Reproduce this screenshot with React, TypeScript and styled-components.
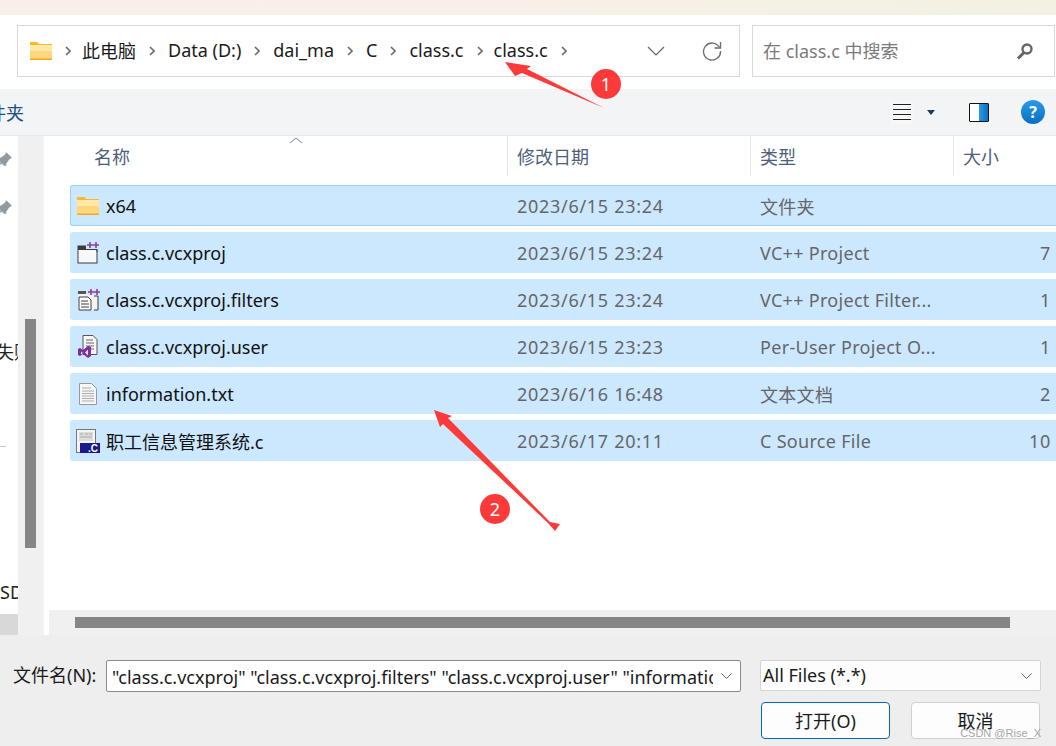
import styled, { createGlobalStyle } from "styled-components";

const files = [
  { name: "x64", date: "2023/6/15 23:24", type: "文件夹", size: "", icon: "folder", pad: 6 },
  { name: "class.c.vcxproj", date: "2023/6/15 23:24", type: "VC++ Project", size: "7", icon: "proj", pad: 6 },
  { name: "class.c.vcxproj.filters", date: "2023/6/15 23:24", type: "VC++ Project Filter...", size: "1", icon: "filters", pad: 6 },
  { name: "class.c.vcxproj.user", date: "2023/6/15 23:23", type: "Per-User Project O...", size: "1", icon: "user", pad: 7 },
  { name: "information.txt", date: "2023/6/16 16:48", type: "文本文档", size: "2", icon: "txt", pad: 8 },
  { name: "职工信息管理系统.c", date: "2023/6/17 20:11", type: "C Source File", size: "10", icon: "dev", pad: 5 },
];

const crumbs = ["此电脑", "Data (D:)", "dai_ma", "C", "class.c", "class.c"];

function FolderIcon() {
  return (
    <svg width="22" height="18" viewBox="0 0 22 18">
      <path d="M0 0h7l2 2h13v14H0z" fill="#f7b928" />
      <rect x="0" y="3" width="22" height="15" fill="#fdd77d" />
      <rect x="0" y="3" width="22" height="6" fill="#ffe7a6" />
      <rect x="0" y="16.500" width="22" height="1.500" fill="#eeac1e" />
    </svg>
  );
}

function Plus({ x, y }: { x: number; y: number }) {
  return <path d={`M${x - 3} ${y}h6M${x} ${y - 3}v6`} stroke="#8f3f98" strokeWidth="1.600" fill="none" />;
}

function FileIcon({ kind }: { kind: string }) {
  if (kind === "folder") return <FolderIcon />;
  if (kind === "proj")
    return (
      <svg width="23" height="22" viewBox="0 0 23 22">
        <rect x="1" y="4" width="19" height="17" fill="#f8f8f8" stroke="#3c3c3c" />
        <rect x="1" y="4" width="19" height="4" fill="#3c3c3c" />
        <rect x="9" y="0" width="14" height="7" fill="#cce8ff" />
        <Plus x={13} y={3} />
        <Plus x={19} y={3} />
        <path d="M20 8v2" stroke="#3c3c3c" />
      </svg>
    );
  if (kind === "filters")
    return (
      <svg width="23" height="22" viewBox="0 0 23 22">
        <rect x="1" y="2" width="8" height="3" fill="#555" />
        <path d="M1 5h20v16H1z" fill="#f4f4f4" />
        <path d="M17 7h4v14h-4" fill="none" stroke="#3c3c3c" />
        <path d="M2 8h9l3 3v10H2z" fill="#fff" stroke="#3c3c3c" />
        <path d="M4 12h7M4 15h8M4 18h8" stroke="#3c3c3c" />
        <rect x="10" y="0" width="12" height="6" fill="#cce8ff" />
        <Plus x={14} y={3} />
        <Plus x={20} y={3} />
      </svg>
    );
  if (kind === "user")
    return (
      <svg width="21" height="23" viewBox="0 0 21 23">
        <path d="M5 .5h10l4 4v15H5z" fill="#f6f6f6" stroke="#555" />
        <path d="M8 5h7M8 8h8M8 11h8M8 14h8" stroke="#666" />
        <path d="M0 14l2-1 3 2 5-4 3 1v9l-3 2-5-4-3 2-2-1z" fill="#7d2f9e" />
        <path d="M3 16.500v3l2-1.500zM10 14.500l-3 3 3 3z" fill="#cce8ff" />
      </svg>
    );
  if (kind === "txt")
    return (
      <svg width="18" height="22" viewBox="0 0 18 22">
        <path d="M.5.5h12l5 5v16H.5z" fill="#f7f7f7" stroke="#999" />
        <path d="M3 5h9M3 8h12M3 10.500h12M3 13h12M3 15.500h12M3 18h12" stroke="#aaa" />
      </svg>
    );
  return (
    <svg width="24" height="24" viewBox="0 0 24 24">
      <rect x="0.500" y="0.500" width="19" height="23" fill="#f4f4f4" stroke="#777" />
      <rect x="3" y="3" width="14" height="9" fill="#dcdcdc" />
      <path d="M4 5h3M9 5h3M13 5h3M4 8h12" stroke="#aaa" />
      <rect x="4" y="14" width="20" height="10" fill="#1a1a8c" />
      <text x="12" y="23" fontSize="10" fontWeight="700" fill="#fff" fontFamily="Liberation Sans, sans-serif">.C</text>
    </svg>
  );
}

export default function App() {
  return (
    <Page>
      <GlobalStyle />
      <TopStrip />
      <AddressRow>
        <AddressBox>
          <Lead>
            <FolderIcon />
            <Chevron />
          </Lead>
          {crumbs.map((c, i) => (
            <Crumb key={c + i} $shift={i === crumbs.length - 1 ? -2 : 0}>
              <CrumbText>{c}</CrumbText>
              <Chevron />
            </Crumb>
          ))}
          <AddressTools>
            <svg width="18" height="10" viewBox="0 0 18 10">
              <path d="M1 1l8 8 8-8" stroke="#666" strokeWidth="1.200" fill="none" />
            </svg>
            <svg width="20" height="20" viewBox="0 0 20 20">
              <path d="M17.500 6.500A8.500 8.500 0 1 0 18.500 10" stroke="#6e6e6e" strokeWidth="1.400" fill="none" />
              <path d="M18.500 1v6h-6" stroke="#6e6e6e" strokeWidth="1.400" fill="none" />
            </svg>
          </AddressTools>
        </AddressBox>
        <SearchBox>
          <CrumbText>在 class.c 中搜索</CrumbText>
          <svg width="18" height="18" viewBox="0 0 18 18">
            <circle cx="11" cy="7" r="4.500" stroke="#666" strokeWidth="2.400" fill="none" />
            <path d="M8 10.500L2 16.500" stroke="#666" strokeWidth="3" />
          </svg>
        </SearchBox>
      </AddressRow>
      <Toolbar>
        <ToolLabel>文件夹</ToolLabel>
        <ToolIcons>
          <ViewButton>
            <svg width="20" height="18" viewBox="0 0 20 18">
              <path d="M1 1.500h18M1 6.500h18M1 11.500h18M1 16.500h18" stroke="#222" strokeWidth="1" />
            </svg>
          </ViewButton>
          <Caret />
          <PaneIcon />
          <HelpIcon>?</HelpIcon>
        </ToolIcons>
      </Toolbar>
      <Body>
        <Nav>
          <NavColumn>
            <NavItem $h={48}><PinIcon /></NavItem>
            <NavItem $h={48}><PinIcon /></NavItem>
            <NavItem $h={98} />
            <NavItem $h={44} $indent={-4}>失败</NavItem>
            <NavItem $h={72} />
            <NavRule />
            <NavItem $h={167} $bottom>SD卡</NavItem>
            <NavFoot />
          </NavColumn>
          <NavTrack>
            <NavThumb />
          </NavTrack>
          <NavGap />
        </Nav>
        <ListPane>
          <Head>
            <HeadCell $pad={24}>
              名称
              <SortMark viewBox="0 0 14 7">
                <path d="M1 6l6-5 6 5" stroke="#888" fill="none" />
              </SortMark>
            </HeadCell>
            <HeadCell $line>修改日期</HeadCell>
            <HeadCell $line>类型</HeadCell>
            <HeadCell $line>大小</HeadCell>
          </Head>
          <Rows>
            {files.map((f, i) => (
              <Row key={f.name} $focused={i === 0}>
                <NameCell>
                  <IconSlot $pad={f.pad}>
                    <FileIcon kind={f.icon} />
                  </IconSlot>
                  {f.name}
                </NameCell>
                <MetaCell $spacing={0.7}>{f.date}</MetaCell>
                <MetaCell $spacing={0.3}>{f.type}</MetaCell>
                <SizeCell>{f.size}</SizeCell>
              </Row>
            ))}
          </Rows>
          <HScroll>
            <HThumb />
          </HScroll>
        </ListPane>
      </Body>
      <Footer>
        <FieldRow>
          <FieldLabel>文件名(N):</FieldLabel>
          <NameInput>
            <NameText>"class.c.vcxproj" "class.c.vcxproj.filters" "class.c.vcxproj.user" "information.txt" "职工信息管理系统.c"</NameText>
            <SmallChevron />
          </NameInput>
          <TypeSelect>
            <FieldText>All Files (*.*)</FieldText>
            <SmallChevron />
          </TypeSelect>
        </FieldRow>
        <ButtonRow>
          <DialogButton $primary>打开(O)</DialogButton>
          <DialogButton>取消</DialogButton>
        </ButtonRow>
        <Watermark>CSDN @Rise_X</Watermark>
      </Footer>
      <Arrows viewBox="0 0 1056 746">
        <polygon points="505,62 531,66 527,69 604,108 522,73 515,76" fill="#fc3a3a" />
        <polygon points="434,410 452,416 448,418 550,522 560,524 555,531 548,523 443,424 440,427" fill="#fc3a3a" />
      </Arrows>
      <Badge $x={606} $y={84}>1</Badge>
      <Badge $x={495} $y={509}>2</Badge>
    </Page>
  );
}

function Chevron() {
  return (
    <svg width="6" height="10" viewBox="0 0 6 10">
      <path d="M1 1l4 4-4 4" stroke="#6b6b6b" strokeWidth="1.600" fill="none" />
    </svg>
  );
}

function SmallChevron() {
  return (
    <svg width="11" height="6" viewBox="0 0 11 6">
      <path d="M.5.500l5 5 5-5" stroke="#666" fill="none" />
    </svg>
  );
}

function PinIcon() {
  return (
    <svg width="18" height="18" viewBox="0 0 16 16">
      <path d="M10 1l5 5-2 1-3 4 0 2-2 0-2-2-5 4 4-5-2-2 0-2 2 0 4-3z" fill="#8f9aa3" />
    </svg>
  );
}

const GlobalStyle = createGlobalStyle`
  html, body {
    margin: 0;
    padding: 0;
    background: #fff;
  }
  * {
    box-sizing: border-box;
  }
`;

const Page = styled.div`
  position: relative;
  width: 1056px;
  height: 746px;
  overflow: hidden;
  display: flex;
  flex-direction: column;
  background: #fff;
  color: #1a1a1a;
  font-family: "Noto Sans", "Noto Sans CJK SC", sans-serif;
  font-size: 18px;
`;

const TopStrip = styled.div`
  height: 15px;
  background: linear-gradient(90deg, #f8efe9, #f8f0e8 50%, #f3f1e2);
`;

const AddressRow = styled.div`
  height: 74px;
  padding: 10px 1px 12px 17px;
  display: flex;
  gap: 12px;
`;

const AddressBox = styled.div`
  width: 723px;
  border: 1px solid #d9d9d9;
  display: flex;
  align-items: center;
  padding-left: 12px;
  gap: 13px;
`;

const Lead = styled.div`
  display: flex;
  align-items: center;
  gap: 13px;
  margin-right: -2px;
`;

const Crumb = styled.div<{ $shift: number }>`
  display: flex;
  align-items: center;
  gap: 13px;
  margin-left: ${p => p.$shift}px;
`;

const CrumbText = styled.span`
  padding-bottom: 2px;
`;

const AddressTools = styled.div`
  margin-left: auto;
  padding-right: 17px;
  display: flex;
  align-items: center;
  gap: 37px;
`;

const SearchBox = styled.div`
  flex: 1;
  border: 1px solid #d9d9d9;
  display: flex;
  align-items: center;
  justify-content: space-between;
  padding: 0 20px 0 10px;
  color: #7a7a7a;
`;

const Toolbar = styled.div`
  height: 47px;
  background: #f3f4f6;
  border-bottom: 1px solid #e8e8e8;
  display: flex;
  align-items: center;
  justify-content: space-between;
`;

const ToolLabel = styled.div`
  width: 24px;
  overflow: hidden;
  display: flex;
  justify-content: flex-end;
  white-space: nowrap;
  color: #1c4f86;
`;

const ToolIcons = styled.div`
  display: flex;
  align-items: center;
  padding-right: 11px;
`;

const ViewButton = styled.div`
  width: 23px;
  height: 23px;
  background: #f7f7f7;
  display: flex;
  align-items: center;
  justify-content: center;
`;

const Caret = styled.div`
  width: 0;
  height: 0;
  margin-left: 14px;
  border-left: 4px solid transparent;
  border-right: 4px solid transparent;
  border-top: 5px solid #1f3a5f;
`;

const PaneIcon = styled.div`
  width: 20px;
  height: 19px;
  margin-left: 34px;
  border: 1px solid #111;
  border-radius: 1px;
  background: linear-gradient(90deg, #fff 50%, #2a9be6 50%, #0b6fc2);
`;

const HelpIcon = styled.div`
  width: 24px;
  height: 24px;
  margin-left: 32px;
  border-radius: 50%;
  background: linear-gradient(180deg, #2a9be6, #0b6fc2);
  color: #fff;
  font-size: 16px;
  font-weight: 700;
  line-height: 24px;
  text-align: center;
`;

const Body = styled.div`
  height: 499px;
  display: flex;
`;

const Nav = styled.div`
  width: 49px;
  display: flex;
`;

const NavColumn = styled.div`
  width: 18px;
  display: flex;
  flex-direction: column;
  overflow: hidden;
`;

const NavItem = styled.div<{ $h: number; $indent?: number; $bottom?: boolean }>`
  height: ${p => p.$h}px;
  flex: none;
  display: flex;
  align-items: ${p => (p.$bottom ? "flex-end" : "center")};
  margin-left: ${p => p.$indent ?? 0}px;
  white-space: nowrap;
  line-height: 44px;
  color: #222;

  svg {
    margin-left: -5px;
  }
`;

const NavRule = styled.div`
  width: 6px;
  height: 1px;
  flex: none;
  background: #c8c8c8;
`;

const NavFoot = styled.div`
  flex: 1;
  background: #d8d8d8;
`;

const NavTrack = styled.div`
  width: 25px;
  background: #f0f0f0;
  padding: 183px 7px 0;
`;

const NavThumb = styled.div`
  height: 229px;
  background: #868686;
`;

const NavGap = styled.div`
  width: 6px;
  border-left: 1px solid #f4f4f4;
`;

const columns = "437px 243px 203px 103px";

const ListPane = styled.div`
  flex: 1;
  display: flex;
  flex-direction: column;
`;

const Head = styled.div`
  height: 40px;
  flex: none;
  margin-left: 21px;
  display: grid;
  grid-template-columns: ${columns};
  color: #4c607a;
`;

const HeadCell = styled.div<{ $pad?: number; $line?: boolean }>`
  position: relative;
  display: flex;
  align-items: center;
  padding-left: ${p => p.$pad ?? 9}px;
  border-left: ${p => (p.$line ? "1px solid #e5e5e5" : "none")};
`;

const SortMark = styled.svg`
  position: absolute;
  top: 1px;
  left: 219px;
  width: 14px;
  height: 7px;
`;

const Rows = styled.div`
  flex: 1;
  padding: 9px 0 0 21px;
  display: flex;
  flex-direction: column;
  gap: 6px;
`;

const Row = styled.div<{ $focused: boolean }>`
  height: 41px;
  flex: none;
  display: grid;
  grid-template-columns: ${columns};
  align-items: center;
  background: #cce8ff;
  border: 1px solid ${p => (p.$focused ? "#99d1ff" : "#cce8ff")};
  border-right: none;
  border-radius: 3px 0 0 3px;
`;

const NameCell = styled.div`
  display: flex;
  align-items: center;
  color: #111;
`;

const IconSlot = styled.div<{ $pad: number }>`
  width: 35px;
  padding-left: ${p => p.$pad}px;
  display: flex;
  align-items: center;
`;

const MetaCell = styled.div<{ $spacing: number }>`
  padding-left: 9px;
  color: #666;
  white-space: nowrap;
  letter-spacing: ${p => p.$spacing}px;
`;

const SizeCell = styled.div`
  text-align: right;
  padding-right: 6px;
  color: #666;
  letter-spacing: 0.7px;
`;

const HScroll = styled.div`
  height: 25px;
  flex: none;
  background: #f0f0f0;
  padding: 7px 47px 7px 26px;
`;

const HThumb = styled.div`
  height: 11px;
  background: #868686;
`;

const Footer = styled.div`
  position: relative;
  flex: 1;
  background: #eeeeee;
  padding: 25px 15px 0 13px;
`;

const FieldRow = styled.div`
  display: flex;
  align-items: flex-start;
`;

const FieldLabel = styled.div`
  width: 93px;
  height: 32px;
  line-height: 30px;
  white-space: nowrap;
`;

const NameInput = styled.div`
  width: 635px;
  height: 32px;
  background: #fff;
  border: 1px solid #8a8a8a;
  border-radius: 2px;
  display: flex;
  align-items: center;
  padding: 0 8px 0 5px;
`;

const NameText = styled.div`
  flex: 1;
  overflow: hidden;
  white-space: nowrap;
  margin-right: 8px;
`;

const TypeSelect = styled.div`
  width: 281px;
  height: 31px;
  margin-left: 19px;
  background: #fdfdfd;
  border: 1px solid #d4d4d4;
  border-radius: 2px;
  display: flex;
  align-items: center;
  justify-content: space-between;
  padding: 0 8px 0 2px;
`;

const FieldText = styled.span`
  padding-bottom: 2px;
`;

const ButtonRow = styled.div`
  display: flex;
  justify-content: flex-end;
  gap: 21px;
  margin: 10px 1px 0 0;
`;

const DialogButton = styled.div<{ $primary?: boolean }>`
  width: 129px;
  height: 37px;
  padding-bottom: 2px;
  display: flex;
  align-items: center;
  justify-content: center;
  background: #fdfdfd;
  border: 1px solid ${p => (p.$primary ? "#0067c0" : "#d0d0d0")};
  border-radius: 4px;
`;

const Watermark = styled.div`
  position: absolute;
  right: 15px;
  bottom: 7px;
  font-family: "Liberation Sans", sans-serif;
  font-size: 11px;
  color: #a5a5a5;
`;

const Arrows = styled.svg`
  position: absolute;
  inset: 0;
  width: 1056px;
  height: 746px;
  pointer-events: none;
`;

const Badge = styled.div<{ $x: number; $y: number }>`
  position: absolute;
  left: ${p => p.$x - 15}px;
  top: ${p => p.$y - 15}px;
  width: 30px;
  height: 30px;
  border-radius: 50%;
  background: #fc3a3a;
  color: #fff;
  font-size: 18px;
  line-height: 30px;
  text-align: center;
`;
